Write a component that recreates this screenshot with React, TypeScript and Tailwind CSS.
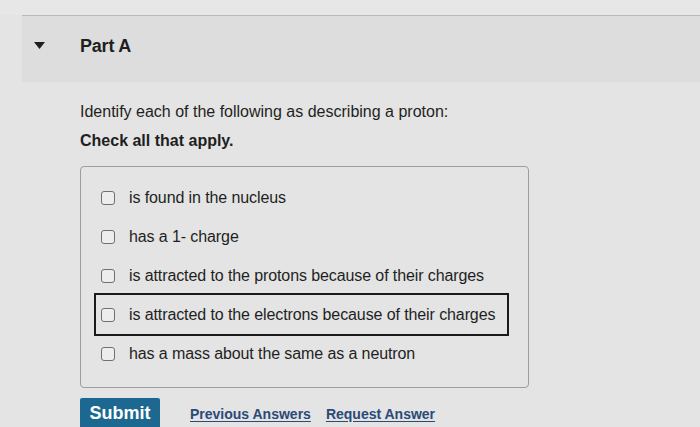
import React from "react";

const options = [
  "is found in the nucleus",
  "has a 1- charge",
  "is attracted to the protons because of their charges",
  "is attracted to the electrons because of their charges",
  "has a mass about the same as a neutron",
];

export default function App() {
  return (
    <div
      className="w-[700px] h-[427px] overflow-hidden bg-[#e3e4e3] text-[#1f1f1f]"
      style={{ fontFamily: '"Liberation Sans", Arial, sans-serif' }}
    >
      <div className="h-[15px] bg-[#e6e7e6]" />
      <div className="ml-[22px] h-[67px] border-t border-[#b9bab9] bg-[#dcdddc] flex items-center">
        <svg width="11" height="7" viewBox="0 0 11 7" className="ml-[12px] mr-[35px] mb-[8px]">
          <polygon points="0,0 11,0 5.5,7" fill="#1f1f1f" />
        </svg>
        <span className="text-[18px] font-bold tracking-[-0.2px] mb-[6px]">Part A</span>
      </div>
      <div className="pl-[80px] pt-[19px]">
        <p className="text-[16px] leading-[22px]">Identify each of the following as describing a proton:</p>
        <p className="text-[16px] leading-[22px] font-bold mt-[7px]">Check all that apply.</p>
        <div className="mt-[14px] w-[449px] h-[222px] border border-[#9c9d9c] rounded-[4px] pt-[11px] pl-[13px] flex flex-col">
          {options.map((o, i) => (
            <div
              key={o}
              className={
                "flex items-center w-[415px] pl-[5px] border-2 " +
                (i === 3 ? "h-[43px] my-[-2px] border-[#1a1a1a]" : "h-[39px] border-transparent")
              }
            >
              <span className="w-[14px] h-[14px] border border-[#6f706f] rounded-[3px] bg-[#ecedec] mr-[14px]" />
              <span className="text-[16px] tracking-[-0.1px]">{o}</span>
            </div>
          ))}
        </div>
        <div className="mt-[10px] flex items-start">
          <div className="w-[80px] h-[34px] bg-[#1c6891] rounded-t-[2px] text-white font-bold text-[18px] flex items-center justify-center pb-[4px]">
            Submit
          </div>
          <a className="ml-[30px] mt-[6px] text-[14px] font-bold text-[#2b4a78] underline underline-offset-2">Previous Answers</a>
          <a className="ml-[15px] mt-[6px] text-[14px] font-bold text-[#2b4a78] underline underline-offset-2">Request Answer</a>
        </div>
      </div>
    </div>
  );
}
